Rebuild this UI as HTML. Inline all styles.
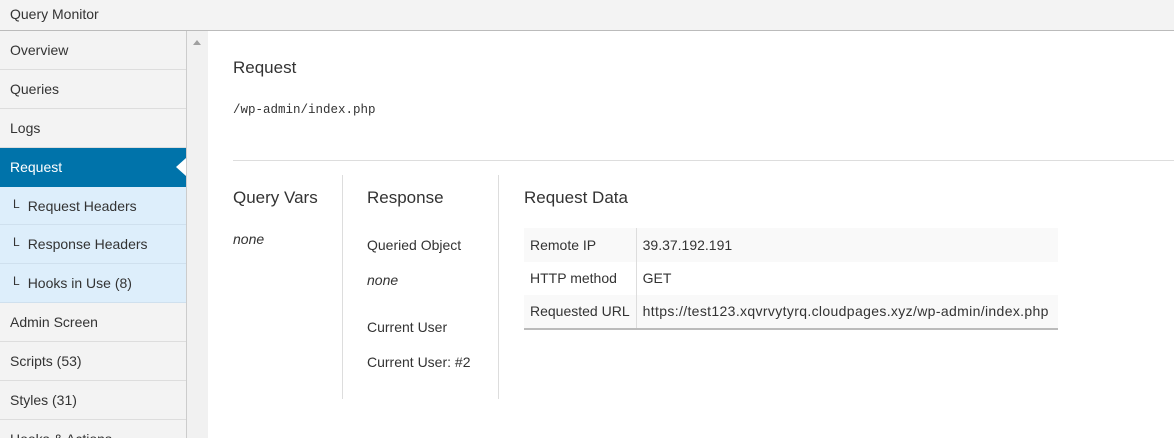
<!DOCTYPE html>
<html><head><style>
*{margin:0;padding:0;box-sizing:border-box}
html,body{width:1174px;height:438px;overflow:hidden}
body{background:#fff;font-family:"Liberation Sans",sans-serif;color:#333;position:relative}
.hdr{position:absolute;left:0;top:0;width:1174px;height:31px;background:#f3f3f3;border-bottom:1px solid #bbb;font-size:14px;padding:6px 0 0 10px;color:#333}
.side{position:absolute;left:0;top:31px;width:187px;height:407px;background:#f3f3f3;border-right:1px solid #ccc;overflow:hidden}
.it{height:38.9px;border-bottom:1px solid #ddd;font-size:14px;line-height:38px;padding-left:10px;color:#333;position:relative}
.act{background:#0073aa;color:#fff;border-bottom:none}
.act:after{content:"";position:absolute;right:0;top:10px;border:9px solid transparent;border-right-color:#fff;border-left:none;width:0;height:0;border-right-width:10px}
.sub{background:#ddeefb;border-bottom:1px solid #cfe0ee}
.sub span.l{font-size:12px;margin-right:8px;position:relative;top:-3px;padding-left:3px}
.gut{position:absolute;left:187px;top:31px;width:21px;height:407px;background:#f1f1f1}
.gut:after{content:"";position:absolute;left:6px;top:9px;border:4px solid transparent;border-bottom:5px solid #a0a0a0;border-top:none}
.a{position:absolute;white-space:nowrap}
h2{font-weight:normal;font-size:17px;color:#333}
.mono{font-family:"Liberation Mono",monospace;font-size:12.5px}
.vl{position:absolute;width:1px;background:#ddd;top:175px;height:224px}
table{position:absolute;left:524px;top:228px;width:534px;border-collapse:collapse;font-size:14px;border-bottom:2px solid #bbb}
td{height:33.5px;padding:0 6px;white-space:nowrap}
tr:nth-child(odd){background:#f9f9f9}
td:first-child{border-right:1px solid #ddd;width:111px}
td.u{letter-spacing:0.35px}
</style></head><body>
<div class="hdr">Query Monitor</div>
<div class="side">
<div class="it">Overview</div>
<div class="it">Queries</div>
<div class="it">Logs</div>
<div class="it act">Request</div>
<div class="it sub"><span class="l">L</span>Request Headers</div>
<div class="it sub"><span class="l">L</span>Response Headers</div>
<div class="it sub"><span class="l">L</span>Hooks in Use (8)</div>
<div class="it">Admin Screen</div>
<div class="it">Scripts (53)</div>
<div class="it">Styles (31)</div>
<div class="it">Hooks &amp; Actions</div>
</div>
<div class="gut"></div>
<h2 class="a" style="left:233px;top:58px">Request</h2>
<div class="a mono" style="left:233px;top:103px">/wp-admin/index.php</div>
<div class="a" style="left:233px;top:160px;width:941px;height:1px;background:#ddd"></div>
<h2 class="a" style="left:233px;top:188px">Query Vars</h2>
<div class="a" style="left:233px;top:231px;font-size:14px;font-style:italic">none</div>
<div class="vl" style="left:342px"></div>
<h2 class="a" style="left:367px;top:188px">Response</h2>
<div class="a" style="left:367px;top:237px;font-size:14px">Queried Object</div>
<div class="a" style="left:367px;top:272px;font-size:14px;font-style:italic">none</div>
<div class="a" style="left:367px;top:319px;font-size:14px">Current User</div>
<div class="a" style="left:367px;top:354px;font-size:14px">Current User: #2</div>
<div class="vl" style="left:498px"></div>
<h2 class="a" style="left:524px;top:188px">Request Data</h2>
<table>
<tr><td>Remote IP</td><td>39.37.192.191</td></tr>
<tr><td>HTTP method</td><td>GET</td></tr>
<tr><td>Requested URL</td><td class="u">https://test123.xqvrvytyrq.cloudpages.xyz/wp-admin/index.php</td></tr>
</table>
</body></html>
